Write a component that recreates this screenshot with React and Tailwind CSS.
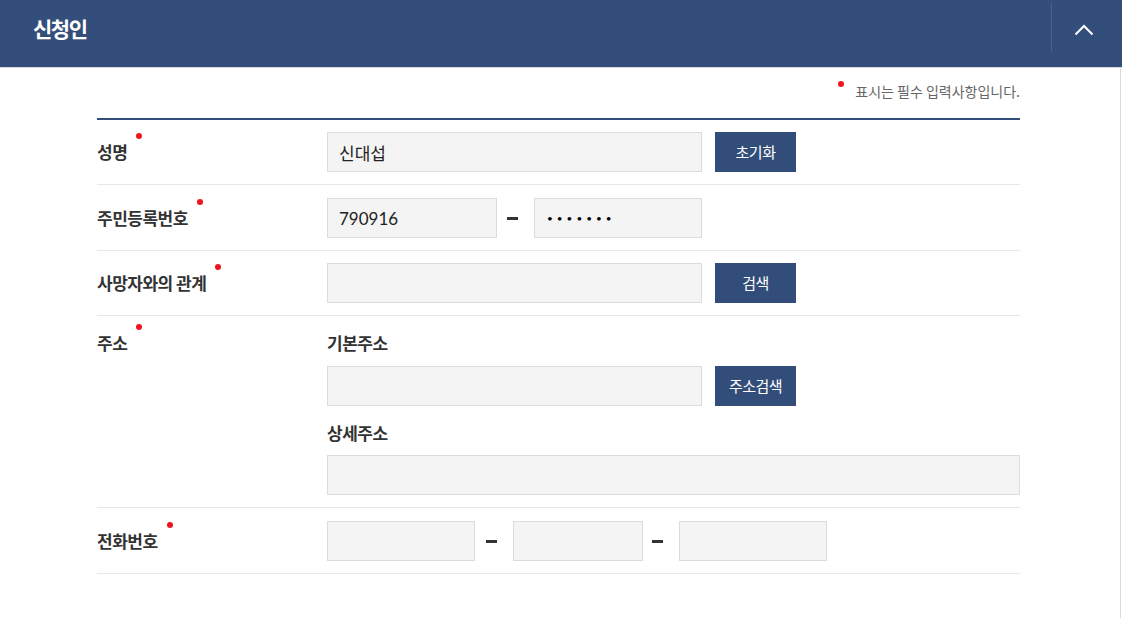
const font = { fontFamily: '"Noto Sans CJK KR", "Noto Sans", sans-serif' };
const inputFont = { fontFamily: 'Lato, "Noto Sans CJK KR", sans-serif' };

function Label({ children, tall = false }) {
  return (
    <div className={`w-[230px] shrink-0 flex items-center ${tall ? 'h-[30px]' : 'h-10'}`}>
      <span className="relative text-[17px] font-bold text-[#333] tracking-[-0.5px] leading-[24px]">
        {children}
        <span className="absolute left-[calc(100%+9px)] top-[-7px] w-[6px] h-[6px] rounded-full bg-[#f0141e]" />
      </span>
    </div>
  );
}

function Field({ className = '', value, type = 'text' }) {
  return (
    <input
      type={type}
      readOnly
      value={value || ''}
      className={`h-10 border border-[#dcdcdc] bg-[#f4f4f4] px-[11px] text-[#222] outline-none ${className}`}
      style={inputFont}
    />
  );
}

function Btn({ children }) {
  return (
    <button className="ml-[13px] h-10 w-[81px] bg-[#334d7a] text-white text-[15px] tracking-[-0.5px]">
      {children}
    </button>
  );
}

function Dash({ left = 'ml-[10px]' }) {
  return <div className={`${left} mr-[16px] w-[11px] h-[3px] bg-[#333]`} />;
}

export default function App() {
  return (
    <div className="w-[1122px] h-[618px] bg-white overflow-hidden" style={font}>
      <div className="h-[67px] bg-[#344e7b] flex items-center justify-between border-b border-[#d9d9d9] box-content">
        <h2 className="pl-[33px] -mt-[9px] text-white text-[21px] font-bold tracking-[-1.5px]">신청인</h2>
        <div className="flex items-center h-full">
          <div className="w-px h-[49px] bg-[#4b6290] -mt-[13px]" />
          <button className="w-[70px] pr-[6px] h-full flex items-center justify-center -mt-[8px]">
            <svg width="20" height="12" viewBox="0 0 20 12" fill="none">
              <path d="M1.5 10.5 L10 2 L18.5 10.5" stroke="white" strokeWidth="2" />
            </svg>
          </button>
        </div>
      </div>

      <div className="h-[551px] w-[1121px] border-r border-[#dcdcdc]">
        <div className="ml-[97px] w-[923px]">
          <div className="pt-3 pb-4 flex justify-end items-center">
            <span className="relative text-[14px] text-[#666] leading-[22px]">
              <span className="absolute left-[-17px] top-[1px] w-[6px] h-[6px] rounded-full bg-[#f0141e]" />
              표시는 필수 입력사항입니다.
            </span>
          </div>
          <div className="border-t-2 border-[#334d7a]">
            <div className="flex items-start py-3 border-b border-[#e8e8e8]">
              <Label>성명</Label>
              <Field className="w-[375px] text-[17px]" value="신대섭" />
              <Btn>초기화</Btn>
            </div>
            <div className="flex items-center pt-[13px] pb-3 border-b border-[#e8e8e8]">
              <Label>주민등록번호</Label>
              <Field className="w-[170px] text-[17px]" value="790916" />
              <Dash />
              <Field className="w-[168px] tracking-[4px] text-[10px] pl-[12px] !text-black" type="password" value="1234567" />
            </div>
            <div className="flex items-start py-3 border-b border-[#e8e8e8]">
              <Label>사망자와의 관계</Label>
              <Field className="w-[375px]" />
              <Btn>검색</Btn>
            </div>
            <div className="flex items-start py-3 border-b border-[#e8e8e8]">
              <Label tall>주소</Label>
              <div className="flex-1">
                <div className="h-[30px] leading-[30px] text-[17px] font-bold text-[#333] tracking-[-0.5px] mb-2">기본주소</div>
                <div className="flex">
                  <Field className="w-[375px]" />
                  <Btn>주소검색</Btn>
                </div>
                <div className="h-[30px] leading-[30px] text-[17px] font-bold text-[#333] tracking-[-0.5px] mt-3 mb-[7px]">상세주소</div>
                <Field className="w-full" />
              </div>
            </div>
            <div className="flex items-center pt-[13px] pb-3 border-b border-[#e8e8e8]">
              <Label>전화번호</Label>
              <Field className="w-[148px]" />
              <Dash left="ml-[11px]" />
              <Field className="w-[130px]" />
              <Dash left="ml-[9px]" />
              <Field className="w-[148px]" />
            </div>
          </div>
        </div>
      </div>
    </div>
  );
}
